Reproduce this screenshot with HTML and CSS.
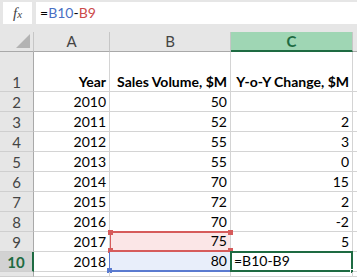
FILE: index.html
```html
<!DOCTYPE html>
<html lang="en">
<head>
    <meta charset="UTF-8">
    <title>Sheet</title>
    <link rel="stylesheet" href="styles.css">
</head>
<body>
    <div class="formula-bar">
        <div class="fx">f<span class="x">x</span></div>
        <div class="formula">=<span class="ref-b">B10</span>-<span class="ref-r">B9</span></div>
    </div>
    <div class="sheet">
        <div class="hd corner"><span class="tri"></span></div>
        <div class="hd">A</div>
        <div class="hd">B</div>
        <div class="hd col-active">C</div>
        <div class="hd rest"></div>

        <div class="rh tall">1</div>
        <div class="cell tall bold">Year</div>
        <div class="cell tall bold">Sales Volume, $M</div>
        <div class="cell tall bold">Y-o-Y Change, $M</div>
        <div class="cell tall rest"></div>

        <div class="rh">2</div><div class="cell">2010</div><div class="cell">50</div><div class="cell"></div><div class="cell rest"></div>
        <div class="rh">3</div><div class="cell">2011</div><div class="cell">52</div><div class="cell">2</div><div class="cell rest"></div>
        <div class="rh">4</div><div class="cell">2012</div><div class="cell">55</div><div class="cell">3</div><div class="cell rest"></div>
        <div class="rh">5</div><div class="cell">2013</div><div class="cell">55</div><div class="cell">0</div><div class="cell rest"></div>
        <div class="rh">6</div><div class="cell">2014</div><div class="cell">70</div><div class="cell">15</div><div class="cell rest"></div>
        <div class="rh">7</div><div class="cell">2015</div><div class="cell">72</div><div class="cell">2</div><div class="cell rest"></div>
        <div class="rh">8</div><div class="cell">2016</div><div class="cell">70</div><div class="cell">-2</div><div class="cell rest"></div>
        <div class="rh">9</div><div class="cell">2017</div>
        <div class="cell pick-red">75<i class="h tl"></i><i class="h tr"></i><i class="h bl"></i><i class="h br"></i></div>
        <div class="cell">5</div><div class="cell rest"></div>
        <div class="rh row-active">10</div><div class="cell">2018</div>
        <div class="cell pick-blue">80<i class="h bl"></i></div>
        <div class="cell active">=B10-B9<i class="h br"></i></div>
        <div class="cell rest"></div>
        <div class="rh"></div><div class="cell"></div><div class="cell"></div><div class="cell"></div><div class="cell rest"></div>
    </div>
</body>
</html>
```

FILE: styles.css
```css
* {
    margin: 0;
    padding: 0;
    box-sizing: border-box;
}
body {
    background-color: #e6e6e6;
    font-family: Lato, "Open Sans", sans-serif;
    font-size: 14px;
    color: #000;
    overflow: hidden;
}
.formula-bar {
    display: flex;
    gap: 4px;
    padding: 2px 0 0 3px;
    height: 32px;
}
.fx {
    width: 29px;
    height: 22px;
    background-color: #fff;
    font-family: "Liberation Serif", serif;
    font-style: italic;
    font-size: 15px;
    color: #444;
    text-align: center;
    line-height: 22px;
}
.fx .x {
    font-size: 11px;
}
.formula {
    flex: 1;
    height: 22px;
    background-color: #fff;
    line-height: 22px;
    padding-left: 4px;
    font-size: 14px;
}
.ref-b {
    color: #4a6fc4;
}
.ref-r {
    color: #cc4a4a;
}
.sheet {
    display: grid;
    grid-template-columns: 34px 76px 121px 122px 1fr;
    grid-template-rows: 20px 40px repeat(9, 20px) 5px;
    background-color: #fff;
}
.hd {
    background-color: #e6e6e6;
    border-right: 1px solid #c6c6c6;
    border-bottom: 1px solid #a9a9a9;
    text-align: center;
    color: #444;
    font-size: 15px;
    line-height: 19px;
}
.corner {
    position: relative;
}
.tri {
    position: absolute;
    right: 3px;
    bottom: 3px;
    width: 0;
    height: 0;
    border-left: 14px solid transparent;
    border-bottom: 14px solid #b3b3b3;
}
.hd.rest {
    border-right: none;
}
.col-active {
    background-color: #9fd6b4;
    color: #1e6b42;
    font-weight: 700;
    border-bottom: 2px solid #1e6b42;
}
.rh {
    background-color: #e6e6e6;
    border-right: 1px solid #a9a9a9;
    border-bottom: 1px solid #cfcfcf;
    color: #444;
    font-size: 15px;
    text-align: center;
    display: flex;
    align-items: flex-end;
    justify-content: center;
}
.row-active {
    background-color: #d2d2d2;
    color: #1e6b42;
    font-weight: 700;
    border-right: 2px solid #1e6b42;
}
.cell {
    position: relative;
    border-right: 1px solid #d4d4d4;
    border-bottom: 1px solid #d4d4d4;
    display: flex;
    align-items: flex-end;
    justify-content: flex-end;
    padding: 0 3px 0 2px;
    line-height: 18px;
    white-space: nowrap;
}
.cell.rest {
    border-right: none;
    background-color: #fff;
}
.bold {
    font-weight: 700;
}
.pick-red {
    background-color: #fbe6e7;
    border-top: 2px solid #d65b5b;
    border-bottom: 2px solid #d65b5b;
    border-left: 1px solid #d65b5b;
    margin-top: -1px;
}
.pick-blue {
    background-color: #e8eefa;
    border-left: 1px solid #5a7bd0;
    border-bottom: 2px solid #5a7bd0;
    margin-left: -1px;
}
.active {
    border: 2px solid #1e6b42;
    justify-content: flex-start;
    margin-left: -1px;
    margin-top: -1px;
}
.h {
    position: absolute;
    width: 5px;
    height: 5px;
}
.pick-red .h {
    background-color: #d65b5b;
}
.pick-blue .h {
    background-color: #5a7bd0;
}
.active .h {
    background-color: #1e6b42;
    border: 1px solid #fff;
    right: -4px;
    bottom: -4px;
}
.tl { left: -3px; top: -3px; }
.tr { right: -3px; top: -3px; }
.bl { left: -3px; bottom: -3px; }
.br { right: -3px; bottom: -3px; }
```
